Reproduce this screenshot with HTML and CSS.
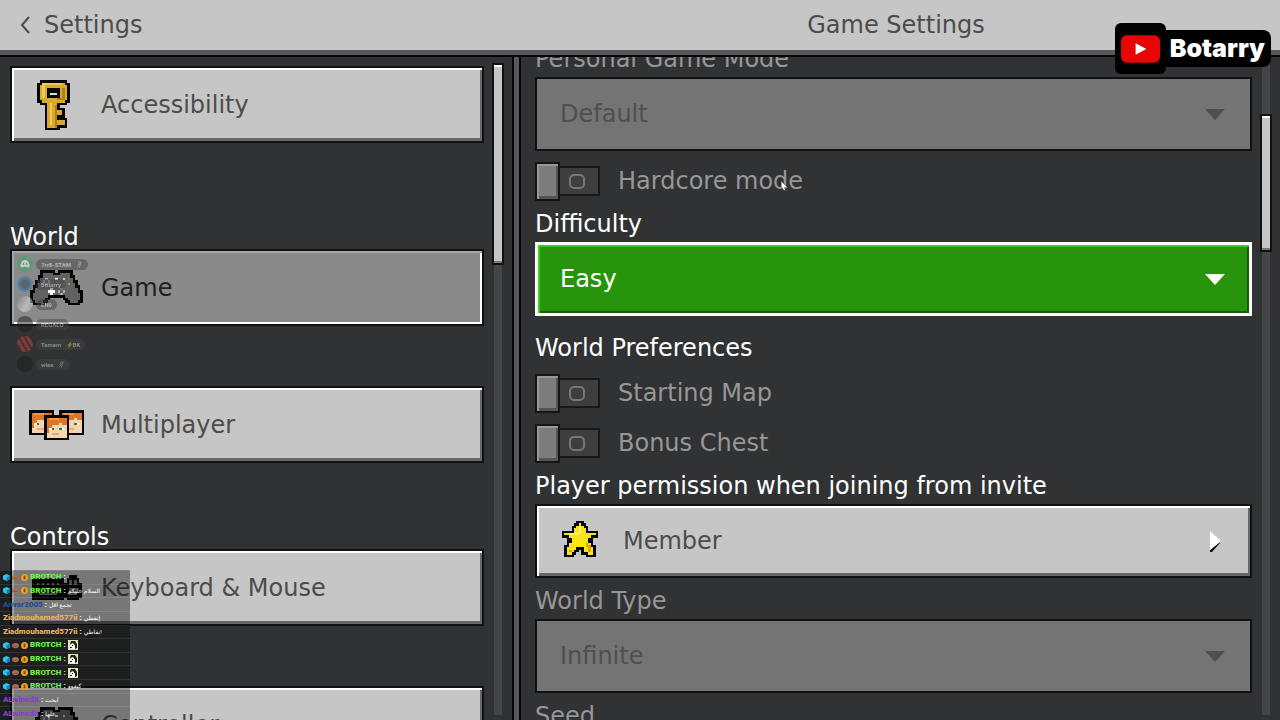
FILE: index.html
```html
<!DOCTYPE html>
<html lang="en">
<head>
<meta charset="utf-8">
<meta name="viewport" content="width=device-width, initial-scale=1">
<title>Game Settings</title>
<link rel="stylesheet" href="styles.css">
</head>
<body>
<svg class="sprites" aria-hidden="true">
  <symbol id="head" viewBox="0 0 10 10">
    <path fill="#050505" d="M0 0h10v10H0z"/>
    <path fill="#f3d5b2" d="M1 1h8v8H1z"/>
    <path fill="#d97828" d="M1 1h8v3H7v-1H6v1H3v1H2v2H1z"/>
    <path fill="#ee964a" d="M2 1h4v1H2z"/>
    <path fill="#fff" d="M2 5h1v1H2zM7 5h1v1H7z"/>
    <path fill="#3c7428" d="M3 5h1v1H3zM6 5h1v1H6z"/>
    <path fill="#eaa78d" d="M3 7h3v1H3z"/>
  </symbol>
  <symbol id="pad" viewBox="0 0 21 14">
    <path fill="#626262" stroke="#050505" stroke-width="2" paint-order="stroke" d="M5 1h4v1h3v-1h4v2h1v2h1v2h1v2h1v3h-1v1h-3v-1h-1v-1h-1v-1H7v1H6v1H5v1H2v-1H1V9h1V7h1V5h1V3h1z"/>
    <path fill="#aaa" d="M6 3h1v1H6zM5 4h1v1H5zM7 4h1v1H7zM6 5h1v1H6zM12 7h1v1h-1zM11 8h1v1h-1zM13 8h1v1h-1zM12 9h1v1h-1z"/>
    <path fill="#fff" d="M8 7h1v1h1v1H9v1H8V9H7V8h1zM10 3h1v1h-1z"/>
    <path fill="#e8d94a" d="M13 3h1v1h-1z"/><path fill="#d8453d" d="M15 3h1v1h-1z"/>
    <path fill="#4a8bd0" d="M13 5h1v1h-1z"/><path fill="#6ab54d" d="M15 5h1v1h-1z"/>
  </symbol>
  <symbol id="caret" viewBox="0 0 20 11">
    <path d="M0 0h20L10 11z"/>
  </symbol>
  <symbol id="cube" viewBox="0 0 8 8">
    <path fill="#2fc4ee" d="M0 2l4-2 4 2v4L4 8 0 6z"/><path fill="#0d7fb4" d="M4 4l4-2v4L4 8z"/>
  </symbol>
  <symbol id="bean" viewBox="0 0 8 8">
    <ellipse cx="4" cy="4" rx="4" ry="3" fill="#a96d53"/><path d="M2 5h4" stroke="#7d4c38"/>
  </symbol>
  <symbol id="coin" viewBox="0 0 8 8">
    <circle cx="4" cy="4" r="4" fill="#f0a11b"/><path fill="#7a4300" d="M3 2h2v4H3z"/>
  </symbol>
  <symbol id="emote" viewBox="0 0 10 10">
    <path fill="#e4e5bd" d="M0 0h10v10H0z"/><path fill="#222" d="M3 1h4l2 3v4L7 9V6L5 4 3 5 2 3z"/><path fill="#fff" d="M3 4l2-1 2 3-1 3H3z"/><path fill="#222" d="M4 5h1v1H4zM2 7h2v1H2z"/>
  </symbol>
  <symbol id="mic" viewBox="0 0 8 8">
    <path fill="none" stroke="#aaa" d="M3 1h2v3H3zM2 4l2 2 2-2M4 6v2M1 7l6-6"/>
  </symbol>
  <symbol id="discord" viewBox="0 0 10 8">
    <path fill="#fff" d="M2 1l2-1h2l2 1 2 5-2 2-1-1H3L2 8 0 6z"/><path fill="#3f9c68" d="M3 3h1v2H3zM6 3h1v2H6z"/>
  </symbol>
</svg>

<header class="topbar">
  <button class="back" type="button">
    <svg class="back-icon" viewBox="0 0 10 18" aria-hidden="true"><path d="M9 1L2 9l7 8"/></svg>
    Settings
  </button>
  <h1 class="page-title">Game Settings</h1>
</header>

<div class="columns">
  <div class="pane">
    <nav class="menu" aria-label="Settings sections">
      <button class="card" type="button">
        <svg class="card-icon key" viewBox="0 0 13 20" shape-rendering="crispEdges" aria-hidden="true">
          <path fill="#d9a92f" stroke="#050505" stroke-width="2" paint-order="stroke" d="M2 1h9v1h1v6h-1v1H8v3h2v2H8v2h3v2H8v1H4V9H2V8H1V2h1z"/>
          <path fill="#f0ca55" d="M2 1h8v1H3v5H2zM5 9h1v9H5z"/>
          <path fill="#b27f1c" d="M10 3h1v5H8V7h2zM7 10h1v9H7z"/>
          <path fill="#050505" d="M4 3h5v4H4z"/><path fill="#c4e2e6" d="M5 5h3v1H5z"/>
        </svg>
        <span>Accessibility</span>
      </button>
      <h2 class="menu-title spaced">World</h2>
      <button class="card selected" type="button" aria-current="page">
        <svg class="card-icon pad" shape-rendering="crispEdges" aria-hidden="true"><use href="#pad"/></svg>
        <span>Game</span>
      </button>
      <button class="card" type="button">
        <svg class="card-icon heads" viewBox="0 0 22 12" shape-rendering="crispEdges" aria-hidden="true">
          <use href="#head" width="10" height="10"/><use href="#head" x="12" width="10" height="10"/><use href="#head" x="6" y="2" width="10" height="10"/>
        </svg>
        <span>Multiplayer</span>
      </button>
      <h2 class="menu-title">Controls</h2>
      <button class="card" type="button">
        <svg class="card-icon keyboard" viewBox="0 0 20 10" shape-rendering="crispEdges" aria-hidden="true">
          <path fill="#050505" d="M0 1h13v9H0zM15 0h3v1h1v2h1v6h-1v1h-5V9h-1V3h1V1h1z"/>
          <path fill="#777" d="M2 3h1v1H2zM4 3h1v1H4zM6 3h1v1H6zM8 3h1v1H8zM10 3h1v1h-1zM2 5h1v1H2zM4 5h1v1H4zM6 5h1v1H6zM8 5h1v1H8zM10 5h1v1h-1zM3 7h7v1H3zM15 2h1v2h-1zM17 2h1v2h-1zM15 5h3v3h-3z"/>
        </svg>
        <span>Keyboard &amp; Mouse</span>
      </button>
      <button class="card" type="button">
        <svg class="card-icon pad" shape-rendering="crispEdges" aria-hidden="true"><use href="#pad"/></svg>
        <span>Controller</span>
      </button>
    </nav>
    <div class="scrollbar menu-scroll"><div class="thumb"></div></div>
  </div>

  <main class="pane detail">
    <form class="fields">
      <label class="title muted" for="mode">Personal Game Mode</label>
      <div class="select-box">
        <select id="mode" disabled><option>Default</option></select>
        <svg class="caret" aria-hidden="true"><use href="#caret"/></svg>
      </div>
      <label class="toggle"><input type="checkbox" disabled><span class="switch"><i class="ring"></i></span>Hardcore mode</label>
      <label class="title" for="difficulty">Difficulty</label>
      <div class="select-box active">
        <select id="difficulty"><option>Easy</option></select>
        <svg class="caret" aria-hidden="true"><use href="#caret"/></svg>
      </div>
      <h2 class="title group">World Preferences</h2>
      <label class="toggle"><input type="checkbox" disabled><span class="switch"><i class="ring"></i></span>Starting Map</label>
      <label class="toggle"><input type="checkbox" disabled><span class="switch"><i class="ring"></i></span>Bonus Chest</label>
      <label class="title" for="permission">Player permission when joining from invite</label>
      <button class="card member" id="permission" type="button">
        <svg class="star" viewBox="0 0 15 15" shape-rendering="crispEdges" aria-hidden="true">
          <path fill="#f9e516" stroke="#050505" stroke-width="2" paint-order="stroke" d="M7 1h1v1h1v1h1v2h4v1h-2v1h-1v2h1v2h1v3h-2v-1h-2v-1H9v-1H6v1H5v1H4v1H2v-3h1V9h1V7H3V6H1V5h4V3h1V2h1z"/>
          <path fill="#fff27a" d="M7 2h1v3H7zM3 5h4v1H3z"/>
          <path fill="#d9a90a" d="M10 9h1v1h1v3h-1v-2h-1zM3 12h1v1H3z"/>
        </svg>
        <span>Member</span>
        <svg class="arrow" viewBox="0 0 10 20" aria-hidden="true"><path fill="#111" d="M10 10v2L2 21H0v-2z"/><path fill="#fff" d="M0 0l10 9v2L0 19z"/></svg>
      </button>
      <label class="title muted" for="type">World Type</label>
      <div class="select-box">
        <select id="type" disabled><option>Infinite</option></select>
        <svg class="caret" aria-hidden="true"><use href="#caret"/></svg>
      </div>
      <span class="title muted">Seed</span>
    </form>
    <div class="scrollbar detail-scroll"><div class="thumb"></div></div>
  </main>
</div>

<ul class="voice">
  <li><i class="avatar green"><svg><use href="#discord"/></svg></i><span>7rr8-STAM <svg><use href="#mic"/></svg></span></li>
  <li><i class="avatar blue"></i><span>Botarry</span></li>
  <li><i class="avatar white"></i><span>EN9</span></li>
  <li><i class="avatar"></i><span>REGALO</span></li>
  <li><i class="avatar red"></i><span>Tamem &nbsp; ⚡BK</span></li>
  <li><i class="avatar"></i><span>wlee <svg><use href="#mic"/></svg></span></li>
</ul>

<ol class="chat">
  <li><svg><use href="#cube"/></svg><svg><use href="#bean"/></svg><svg><use href="#coin"/></svg><b class="lime">BROTCH</b> : <span>.</span></li>
  <li><svg><use href="#cube"/></svg><svg><use href="#bean"/></svg><svg><use href="#coin"/></svg><b class="lime">BROTCH</b> : <span lang="ar">السلام عليكم</span></li>
  <li><b class="navy">Anvar2005</b> : <span lang="ar">تجمع اقل</span></li>
  <li><b class="tan">Ziadmouhamed577ii</b> : <span lang="ar">إنقطي</span></li>
  <li><b class="tan">Ziadmouhamed577ii</b> : <span lang="ar">نقاطي!</span></li>
  <li><svg><use href="#cube"/></svg><svg><use href="#bean"/></svg><svg><use href="#coin"/></svg><b class="lime">BROTCH</b> : <svg class="emote"><use href="#emote"/></svg></li>
  <li><svg><use href="#cube"/></svg><svg><use href="#bean"/></svg><svg><use href="#coin"/></svg><b class="lime">BROTCH</b> : <svg class="emote"><use href="#emote"/></svg></li>
  <li><svg><use href="#cube"/></svg><svg><use href="#bean"/></svg><svg><use href="#coin"/></svg><b class="lime">BROTCH</b> : <svg class="emote"><use href="#emote"/></svg></li>
  <li><svg><use href="#cube"/></svg><svg><use href="#bean"/></svg><svg><use href="#coin"/></svg><b class="lime">BROTCH</b> : <span lang="ar">كيفوو</span></li>
  <li><b class="violet">ALwinedX</b> : <span lang="ar">ابحث</span></li>
  <li><b class="violet">ALwinedX</b> : <span lang="ar">علها</span></li>
</ol>

<div class="channel">
  <div class="channel-logo"><svg viewBox="0 0 40 28" aria-hidden="true"><rect width="40" height="28" rx="6" fill="#e80505"/><path fill="#fff" d="M15 8l11 6-11 6z"/></svg></div>
  <div class="channel-name">Botarry</div>
</div>
<svg class="cursor" viewBox="0 0 6 9" aria-hidden="true"><path fill="#fff" stroke="#333" stroke-width=".5" d="M0 0l6 6H3l1 3-2-1-1-2-1 1z"/></svg>
</body>
</html>
```
FILE: styles.css
```css
* { box-sizing: border-box; }
body {
  margin: 0;
  height: 100vh;
  display: flex;
  flex-direction: column;
  overflow: hidden;
  position: relative;
  background: #313233;
  color: #fff;
  font: 24px/28px "DejaVu Sans", sans-serif;
}
button, select { font: inherit; color: inherit; border-radius: 0; }
h1, h2 { margin: 0; font: inherit; }
ul, ol { margin: 0; padding: 0; list-style: none; }
.sprites { display: none; }

.topbar {
  flex: none;
  height: 57px;
  display: grid;
  grid-template-columns: 2fr 3fr;
  align-items: center;
  background: #c6c6c6;
  border-bottom: 2px solid #050505;
  box-shadow: inset 0 -5px #58585a;
  color: #4c4c4c;
  padding-bottom: 5px;
}
.back {
  display: flex;
  align-items: center;
  gap: 14px;
  padding: 0 20px;
  border: 0;
  background: none;
}
.back-icon { width: 10px; height: 18px; fill: none; stroke: #4c4c4c; stroke-width: 2; }
.page-title { text-align: center; }

.columns {
  flex: 1;
  min-height: 0;
  display: grid;
  grid-template-columns: 2fr 3fr;
}
.pane { display: flex; min-width: 0; min-height: 0; overflow: hidden; }
.menu {
  flex: 1;
  display: flex;
  flex-direction: column;
  padding: 9px 8px 0 10px;
}
.menu-title { line-height: 24px; flex: none; margin-top: 2px; }
.menu-title.spaced { margin-top: 22px; }

.card {
  flex: none;
  display: flex;
  align-items: center;
  height: 77px;
  margin-bottom: 60px;
  padding: 0 16px;
  border: 2px solid #111;
  background: #c6c6c6;
  box-shadow: inset 2px 2px #fff, inset -2px -3px #67676a;
  color: #4c4c4c;
  text-align: left;
}
.menu .card span { margin-left: 16px; }
.card.selected {
  background: #8a8a8a;
  box-shadow: inset 2px 2px #a5a5a5, inset -2px -2px #fff;
  color: #202020;
}
.card-icon { flex: none; margin: 0 1px; width: 55px; }
.card-icon.key { height: 50px; padding-right: 6px; }
.card-icon.pad { height: 35px; }
.card-icon.heads { height: 30px; }
.card-icon.keyboard { height: 25px; }

.scrollbar { flex: none; width: 12px; padding: 0 0 5px; background: linear-gradient(#454546, #454546) center / 8px 100% no-repeat; }
.thumb { border: 2px solid #111; background: #c6c6c6; box-shadow: inset 0 2px #fff, inset 0 -2px #777; }
.menu-scroll { margin: 6px 8px 5px 0; }
.menu-scroll .thumb { height: 202px; }
.detail-scroll { margin: 0 8px 5px; }
.detail-scroll .thumb { height: 138px; margin-top: 57px; }

.detail { border-left: 2px solid #050505; box-shadow: inset 5px 0 #58585a, inset 7px 0 #050505; }
.fields {
  flex: 1;
  display: flex;
  flex-direction: column;
  margin-top: -16px;
  padding-left: 21px;
}
.title { flex: none; height: 36px; padding: 4px 0; white-space: nowrap; }
.title.group { margin: 9px 0 2px; }
.muted { color: #979797; }

.select-box { flex: none; position: relative; height: 74px; margin-bottom: 5px; color: #4f4f4f; }
.select-box select {
  appearance: none;
  width: 100%;
  height: 100%;
  padding: 0 23px;
  border: 2px solid #111;
  background: #747474;
  opacity: 1;
}
.select-box.active { color: #fff; }
.select-box.active select {
  padding: 0 22px;
  border: 3px solid #fff;
  background: #27940b;
  box-shadow: inset 2px 2px #3fc925, inset -2px -2px #1b5c0b;
}
.caret { position: absolute; right: 27px; top: 32px; width: 20px; height: 11px; fill: currentColor; pointer-events: none; }

.toggle { flex: none; display: flex; align-items: center; height: 50px; color: #979797; position: relative; }
.toggle input {
  appearance: none;
  position: absolute;
  left: 0;
  width: 25px;
  height: 39px;
  margin: 0;
  border: 2px solid #151515;
  background: #7d7d7d;
  box-shadow: inset 2px 2px #999, inset -2px -3px #555;
}
.switch {
  width: 65px;
  height: 30px;
  margin-right: 18px;
  padding-left: 32px;
  display: flex;
  align-items: center;
  border: 2px solid #181818;
  background: #3e3e3f;
}
.ring { width: 16px; height: 15px; border: 2px solid #777; border-radius: 5px; }

.member { height: 74px; margin-bottom: 5px; padding: 0 25px; }
.member span { flex: 1; margin-left: 25px; }
.star { width: 36px; height: 38px; margin-bottom: 4px; overflow: visible; }
.arrow { width: 10px; height: 20px; margin-right: 5px; overflow: visible; }

.voice { position: absolute; left: 17px; top: 254px; opacity: .5; font: bold 6px/11px Roboto, sans-serif; color: #ddd; }
.voice li { height: 20px; display: flex; align-items: center; gap: 3px; }
.voice span { padding: 0 5px; border-radius: 6px; background: #444; }
.voice svg { width: 7px; height: 7px; vertical-align: middle; margin-left: 3px; }
.avatar { width: 16px; height: 16px; display: grid; place-items: center; border-radius: 50%; background: #1c1c1c; }
.voice .avatar svg { width: 10px; height: 8px; margin: 0; }
.avatar.green { background: #2fa866; }
.avatar.blue { background: radial-gradient(circle, #2b3a4a 30%, #2f78b8 60%); }
.avatar.white { background: linear-gradient(120deg, #777, #eee 60%, #999); }
.avatar.red { background: repeating-linear-gradient(60deg, #c04848 0 3px, #6b2c2c 3px 5px); }

.chat {
  position: absolute;
  left: 0;
  bottom: 0;
  width: 130px;
  height: 150px;
  display: grid;
  grid-auto-rows: 1fr;
  background: rgba(0, 0, 0, .4);
  font: bold 8px/12px Roboto, "DejaVu Sans", sans-serif;
}
.chat li { display: flex; align-items: center; gap: 2px; padding-left: 3px; border-top: 1px solid rgba(255, 255, 255, .1); white-space: nowrap; }
.chat svg { width: 7px; height: 7px; flex: none; }
.chat .emote { width: 10px; height: 10px; }
.chat span { font-size: 6px; font-weight: normal; }
.lime { color: #6fef4d; }
.navy { color: #1f4f94; }
.tan { color: #e2ad64; }
.violet { color: #8440c8; }

.channel { position: absolute; right: 9px; top: 23px; display: flex; align-items: center; }
.channel-logo { width: 51px; height: 51px; display: grid; place-items: center; background: #000; border-radius: 6px; }
.channel-logo svg { width: 39px; height: 28px; }
.channel-name { height: 37px; padding: 0 6px 0 4px; background: #000; border-radius: 0 8px 8px 0; font: 900 25px/36px Inter, sans-serif; }
.cursor { position: absolute; left: 61%; top: 181px; width: 7px; height: 10px; }
```
